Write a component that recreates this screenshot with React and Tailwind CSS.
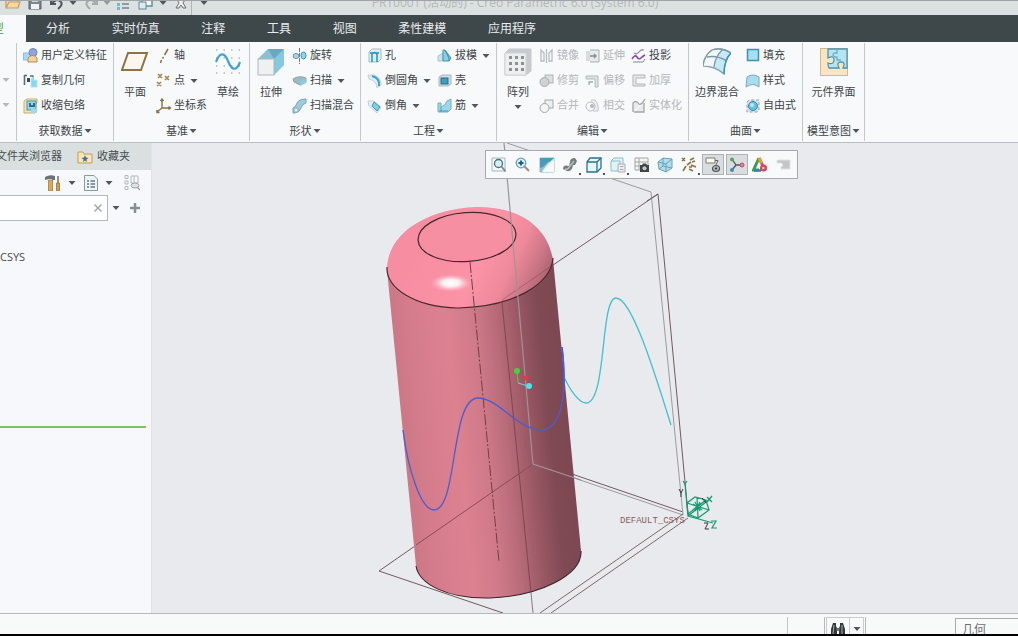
import clsx from "clsx";

const TABS = ["分析", "实时仿真", "注释", "工具", "视图", "柔性建模", "应用程序"];

const ICONS = {
  udf: (
    <>
      <rect x="0.500" y="5" width="8" height="7" fill="#a9d9ee" stroke="#8fbfd6" />
      <circle cx="10" cy="4.500" r="4" fill="#8ea6dc" stroke="#6c86c4" />
      <path d="M5 14V10Q9.500 5 14 10V14Z" fill="#f3d3a4" stroke="#b98c4d" />
    </>
  ),
  copyGeom: (
    <>
      <path d="M1.500 2V12M1 2.500H4" fill="none" stroke="#5f6d78" strokeWidth="1.600" />
      <rect x="4" y="5" width="3" height="4" fill="#354f60" />
      <path d="M7 3H10V7" fill="none" stroke="#5f6d78" strokeWidth="1.300" />
      <path d="M8 6L10 4V7H14V14H8Z" fill="#8ad8ef" stroke="#b6e5f3" />
    </>
  ),
  shrink: (
    <>
      <path d="M1 3L4 1H14V5L12 6V15H1Z" fill="#f6e3ae" stroke="#c9ad63" />
      <rect x="4" y="3" width="9" height="9" fill="#9ad6ea" stroke="#4794b3" />
      <path d="M6 5H8V7H10V5H12V9H6Z" fill="#2f6f8c" />
      <path d="M8 11H14V15H8Z" fill="#9cdbec" />
    </>
  ),
  axis: <path d="M12 1L8.500 7M7.500 9L6.500 10.500M5.500 12L4.500 15" stroke="#8c7142" strokeWidth="1.500" />,
  point: (
    <path
      d="M2 1L6 5M6 1L2 5M9 3L13 7M13 3L9 7M1 9L5 13M5 9L1 13"
      stroke="#a08347"
      strokeWidth="1.500"
    />
  ),
  coord: (
    <path
      d="M6 1V10L1 14M6 10H14M4.500 3L6 1L7.500 3M12.500 8.500L14.500 10L12.500 11.500M1 12V14.500H3.500"
      fill="none"
      stroke="#8c7142"
      strokeWidth="1.400"
    />
  ),
  revolve: (
    <>
      <path d="M7.500 0V16" stroke="#607681" strokeDasharray="4 1" />
      <ellipse cx="4" cy="8" rx="3" ry="2.500" fill="#b8cdd6" stroke="#6b98ad" />
      <ellipse cx="11.500" cy="7.500" rx="2.500" ry="3.500" fill="#8ed5ee" stroke="#3e93b5" />
    </>
  ),
  sweep: (
    <>
      <path d="M1 6Q7 2 14 5V9Q9 8 8 12L2 9Z" fill="#9eb9c3" stroke="#8da5ae" />
      <path d="M8 8L14 6V10L8 13Z" fill="#8acbdf" />
    </>
  ),
  sweepBlend: (
    <>
      <path d="M1 10Q4 9 5 5Q7 1 14 1V5Q10 6 9 10Q8 14 3 15H1Z" fill="#9dcbe0" stroke="#7ba4b7" />
      <path d="M2 10H6V14H2Z" fill="#e0edf3" stroke="#8babb9" />
    </>
  ),
  hole: (
    <>
      <path d="M2 4L5 1H14V11L11 14H2Z" fill="#dceff5" stroke="#9fbfcb" />
      <path d="M5 14V6Q8 3 10 6V14M3 5H12" fill="none" stroke="#2692b6" strokeWidth="1.500" />
    </>
  ),
  round: (
    <>
      <path d="M1 2H7Q14 4 14 12L10 15Q10 8 2 6Z" fill="#dcedf3" stroke="#c0d2d9" />
      <path d="M5 3Q13 5 12 13" fill="none" stroke="#39a2ca" strokeWidth="2" />
    </>
  ),
  chamfer: (
    <>
      <path d="M1 3H7L14 9L10 15L2 8Z" fill="#e3eef2" stroke="#c3d1d7" />
      <path d="M7 4L13 9L10 13L5 8Z" fill="#84cce3" stroke="#3f9abc" />
    </>
  ),
  draft: (
    <>
      <path d="M1 13V8L6 5V13Z" fill="#cbe2eb" stroke="#a9c5d0" />
      <path d="M6 13V2H8L14 10L12 13Z" fill="#8bcde4" stroke="#4195b6" />
      <path d="M8 2L12 10V13" fill="none" stroke="#3c87a5" />
    </>
  ),
  shell: (
    <>
      <path d="M2 4L5 2H14V11L11 13H2Z" fill="#d2dde1" stroke="#a9b8be" />
      <rect x="4" y="5" width="7" height="6" fill="#3f9dbd" stroke="#276f8a" />
    </>
  ),
  rib: (
    <>
      <path d="M1 5H4V14H1ZM10 3L14 1V11L11 14H4V9Q8 8 10 3Z" fill="#9ed5e8" stroke="#74afc7" />
      <path d="M2 13H11" stroke="#4d9fbe" />
    </>
  ),
  mirror: (
    <path d="M7.500 1V15M2 2L5 5V13H2ZM13 2L10 5V13H13Z" fill="none" stroke="#b7bcbf" strokeWidth="1.300" />
  ),
  trim: (
    <>
      <rect x="6" y="2" width="8" height="8" fill="#dcdfe0" stroke="#b0b4b6" />
      <circle cx="5.500" cy="9" r="4.500" fill="#cfd3d5" stroke="#a9adb0" />
    </>
  ),
  merge: (
    <>
      <rect x="6" y="2" width="8" height="8" fill="#eceeef" stroke="#a4a9ac" />
      <circle cx="5.500" cy="10" r="4.500" fill="#f3f4f5" stroke="#a4a9ac" />
    </>
  ),
  extend: (
    <>
      <path d="M5 2H14V14H5" fill="#e6e8e9" stroke="#aaafb2" />
      <path d="M1 3H5V13H1Z" fill="#d9dcdd" />
      <path d="M5 8H11M9 6L11 8L9 10" fill="none" stroke="#868c90" strokeWidth="1.300" />
    </>
  ),
  offset: (
    <>
      <path d="M1 3H13V14H10V6H1Z" fill="#dfe2e3" stroke="#b5b9bb" />
      <path d="M4 12V9H8" fill="none" stroke="#a3a8ab" strokeWidth="1.300" />
    </>
  ),
  intersect: (
    <>
      <path d="M6 2H10Q14 6 13 13H8" fill="#eceeef" stroke="#c2c6c8" />
      <circle cx="5.500" cy="8.500" r="4.500" fill="none" stroke="#b5babc" />
      <circle cx="7" cy="8" r="2" fill="#b4b9bb" />
    </>
  ),
  project: (
    <>
      <path d="M3 5Q6 7 8 4Q10 1 13 2" fill="none" stroke="#90969a" strokeWidth="1.300" />
      <path d="M1 11Q4 6 6 9T10 10T14 7" fill="none" stroke="#8d479e" strokeWidth="1.600" />
      <path d="M2 14H12L14 11" fill="none" stroke="#7b8b93" />
    </>
  ),
  thicken: <path d="M14 2H2V13H14V11H5V5H14Z" fill="#e5e7e8" stroke="#b2b7b9" />,
  solidify: (
    <path d="M2 14V5Q5 2 7 5T12 4L14 1M3 14H13V5" fill="#e8eaeb" stroke="#a1a6a9" strokeWidth="1.300" />
  ),
  fill: <rect x="2.500" y="1.500" width="11" height="11" fill="#a4dff2" stroke="#3d91b3" strokeWidth="1.500" />,
  style: <path d="M2 4Q8 0 14 4V14Q8 9 1 14Z" fill="#a8dcef" stroke="#7fa9ba" />,
  freestyle: (
    <>
      <path d="M2 4L4 2H14V12L12 14H2Z" fill="#dbe5e9" stroke="#8fa3ad" strokeDasharray="3 2" />
      <circle cx="8" cy="8" r="4.500" fill="#68c1de" stroke="#348bac" />
      <circle cx="7" cy="7" r="2" fill="#b8e8f6" />
    </>
  ),
  folder: (
    <path d="M1 13V3H6L7 5H13V7H15L13 13ZM1 13L4 7H14" fill="#f5d79f" stroke="#c69e60" strokeWidth="1.200" />
  ),
  save: (
    <>
      <path d="M2 2H14V14H2Z" fill="#7e878f" stroke="#596269" />
      <path d="M5 2H11V7H5Z" fill="#d4d9dc" />
      <path d="M4 9H12V14H4Z" fill="#f1f3f4" />
    </>
  ),
  undo: <path d="M2 4V9H7M2.500 9Q7 3 11 6T9 14" fill="none" stroke="#4f5659" strokeWidth="2" />,
  redo: <path d="M14 4V9H9M13.500 9Q9 3 5 6T7 14" fill="none" stroke="#a5abad" strokeWidth="2" />,
  regen: (
    <>
      <path d="M2 3H5V6H2ZM2 8H5V11H2ZM2 12H5V15H2Z" fill="#7eb3cc" />
      <path d="M7 5H14M7 9H14M7 13H14" stroke="#75858d" strokeWidth="1.500" />
    </>
  ),
  windows: (
    <>
      <rect x="5" y="2" width="10" height="9" fill="#f4f6f7" stroke="#5c8fa8" strokeWidth="1.500" />
      <rect x="2" y="7" width="7" height="7" fill="#dcebf2" stroke="#698693" />
    </>
  ),
  close: <path d="M3 3H6L8 6L10 3H13L10 8L13 13H10L8 10L6 13H3L6 8Z" fill="#eef0f0" stroke="#6a7072" />,
  favorites: (
    <>
      <path d="M1 3H6L7 5H15V14H1Z" fill="#fbe5b8" stroke="#c49d58" />
      <path d="M8 6L9 8.500L11.500 9L9.500 10.500L10 13L8 11.500L6 13L6.500 10.500L4.500 9L7 8.500Z" fill="#3c7593" />
    </>
  ),
  tools: (
    <>
      <path d="M0 2Q5 -1 10 1V5H7V4H4L0 5Z" fill="#697278" />
      <path d="M3.500 5H7.500V16H3.500Z" fill="#dba95c" stroke="#a87b3a" strokeWidth=".8" />
      <path d="M13 1V8" stroke="#6a6f73" strokeWidth="1.500" />
      <path d="M11.500 8H14.500V16H11.500Z" fill="#d39c4c" stroke="#9f7332" strokeWidth=".8" />
    </>
  ),
  listDoc: (
    <>
      <path d="M1.500 .5H11L14.500 4V15.500H1.500Z" fill="#eef3f5" stroke="#8999a1" />
      <path d="M4 6H6M4 9H6M4 12H6M7.500 6H12M7.500 9H12M7.500 12H12" stroke="#667a84" strokeWidth="1.400" />
    </>
  ),
  treeFind: (
    <>
      <path d="M1 0.500H4V3.500H1ZM1 6H4V9H1ZM1 11.500H4V14.500H1ZM7 1H14V8H7ZM7 11H10M10 1V7" fill="none" stroke="#b2b8bb" />
      <ellipse cx="11" cy="10.500" rx="4" ry="2.500" fill="#dfe2e3" stroke="#9fa5a8" />
      <path d="M13 12L16 15" stroke="#9fa5a8" strokeWidth="1.500" />
    </>
  ),
  zoomFit: (
    <>
      <path d="M1 1H14V14H1Z" fill="#f5f8f9" stroke="#a9b6bc" />
      <circle cx="7.500" cy="6.500" r="4" fill="#d8eef5" stroke="#40738a" strokeWidth="1.300" />
      <path d="M10.500 9.500L14.500 14.500" stroke="#7f8b90" strokeWidth="2" />
    </>
  ),
  zoomIn: (
    <>
      <circle cx="6" cy="6" r="4.800" fill="#d8eff7" stroke="#69a3ba" strokeWidth="1.300" />
      <path d="M3.500 6H8.500M6 3.500V8.500" stroke="#1c5d7c" strokeWidth="1.800" />
      <path d="M9.500 9.500L14 14" stroke="#a18d7c" strokeWidth="2" />
    </>
  ),
  repaint: (
    <>
      <path d="M1 1H15V15H1Z" fill="#8dc1d5" stroke="#9bb8c4" />
      <path d="M1 1H15V4L9 5L4 10L1 11Z" fill="#4b9ab9" />
      <path d="M15 3Q10 6 3 15H15Z" fill="#f6fafb" />
      <path d="M15 2Q9 7 4 14" fill="none" stroke="#dfeff5" strokeWidth="1.500" />
    </>
  ),
  shading: (
    <>
      <path d="M1 12Q1 7 7 9L8 5Q8 1 13 1L15 4L13 8L11 8Q10 15 5 14Z" fill="#777b7e" />
      <path d="M3 12Q6 13 8 9L12 4" fill="none" stroke="#bbbfc1" strokeWidth="1.500" />
    </>
  ),
  display: (
    <>
      <path d="M1 5L4 1H15V11L11 15H1Z" fill="#e6f5fa" stroke="#28738f" strokeWidth="1.300" />
      <path d="M1 5H11V15M11 5L15 1" fill="none" stroke="#28738f" strokeWidth="1.300" />
    </>
  ),
  savedViews: (
    <>
      <path d="M1 4L4 1H13V11L10 14H1Z" fill="#e3f2f7" stroke="#8abed0" />
      <path d="M1 4H10V14" fill="none" stroke="#8abed0" />
      <path d="M8 7H15V15H8Z" fill="#eceeee" stroke="#a9b0b3" />
      <path d="M10 9.500H13.500M10 12.500H13.500" stroke="#a9b0b3" />
    </>
  ),
  viewManager: (
    <>
      <path d="M1 1H14V13H1ZM1 5H14M5 1V13M1 9H8" fill="#f4f5f5" stroke="#a0a6a9" />
      <path d="M6 8H8L9 6.500H12L13 8H15V15H6Z" fill="#3e4447" />
      <circle cx="10.500" cy="11.300" r="2" fill="#c2c8ca" />
    </>
  ),
  perspective: (
    <>
      <path d="M1 5L6 1L15 2V11L9 15L2 12Z" fill="#b3dceb" stroke="#65a2ba" />
      <path d="M1 5L9 7L15 2M9 7V15M6 1V9L2 12M6 9L15 11" fill="none" stroke="#65a2ba" />
    </>
  ),
  datumDisplay: (
    <path
      d="M1 1L4 4M4 1L1 4M9 3L13 1M6 8L10 5M2 14L5 9M10 8L15 10M8 12L12 14M11 5L14 4M8 10L11 10"
      stroke="#8b7442"
      strokeWidth="1.600"
    />
  ),
  annotation: (
    <>
      <path d="M1 1H10V6H1Z" fill="#fffce8" stroke="#777c7e" />
      <path d="M10 3.500H13L11 8" fill="none" stroke="#666c6f" />
      <ellipse cx="11" cy="11.500" rx="3.500" ry="3" fill="#aeb3b5" stroke="#4f5659" strokeWidth="1.200" />
      <circle cx="11" cy="11.500" r="1" fill="#2d3436" />
    </>
  ),
  spin: (
    <>
      <path d="M3 2L7 8H13M7 8L3 13" fill="none" stroke="#465b5d" strokeWidth="1.300" />
      <circle cx="3" cy="2.500" r="2" fill="#50a866" />
      <circle cx="13" cy="8" r="2" fill="#e98190" stroke="#b54f60" />
      <circle cx="3" cy="13" r="2" fill="#3a8fb4" />
    </>
  ),
  appearance: (
    <>
      <path d="M7 1L1.500 13H7" fill="none" stroke="#3e9b58" strokeWidth="3" />
      <path d="M7 1L12 11" fill="none" stroke="#d24ca0" strokeWidth="3" />
      <path d="M7 1L9.500 6" stroke="#e0a526" strokeWidth="3" />
      <path d="M2 13.500H9" stroke="#347fc0" strokeWidth="2.500" />
      <circle cx="11.500" cy="11" r="3.500" fill="#da4258" />
      <path d="M10.500 9.500L13 11L10.500 12.500Z" fill="#fff" />
    </>
  ),
  pause: <path d="M1 3H14V12H5V10Q9 8 5 6H1Z" fill="#c3c7c9" stroke="#dfe1e2" />,
  binoculars: (
    <>
      <path d="M3 1H6V4L7 6V15H1V7ZM10 1H13L15 7V15H9V6L10 4Z" fill="#33383a" />
      <path d="M6.500 6H9.500V9H6.500Z" fill="#6e7679" />
      <path d="M4 3L3 12M12 3L12 12" stroke="#a7adaf" />
    </>
  ),
};

const BIG_ICONS = {
  plane: <path d="M7 5H26L20 22H1Z" fill="#fbf7ef" stroke="#8f7443" strokeWidth="2" />,
  sketch: (
    <>
      <path d="M2 2H26M2 10H26M2 18H26M2 25H26" stroke="#8d9aa2" strokeDasharray="1.500 6" />
      <path d="M2 14C6 3 11 5 14 13S22 25 26 14" fill="none" stroke="#42a4cf" strokeWidth="2.200" />
    </>
  ),
  extrude: (
    <>
      <path d="M1 11L11 1H27V17L17 27H1Z" fill="#a5d7e7" />
      <path d="M1 11L11 1H27L17 11Z" fill="#8cc0d2" />
      <path d="M17 11L27 1V17L17 27Z" fill="#86c9df" />
      <path d="M11 1L17 11L27 1Z" fill="#4b9ab8" opacity=".6" />
      <rect x="1" y="11" width="16" height="16" fill="#edf1f2" stroke="#adb8bd" />
    </>
  ),
  pattern: (
    <>
      <path d="M1 5L5 1H27V23L22 27H1Z" fill="#c8cbcd" stroke="#c6cacc" />
      <path d="M1 5H22V27H1Z" fill="#eceeef" stroke="#d0d3d5" />
      <g fill="#8c9194">
        <path d="M5 8H8V11H5ZM11 8H14V11H11ZM17 8H20V11H17Z" />
        <path d="M5 14H8V17H5ZM11 14H14V17H11ZM17 14H20V17H17Z" />
        <path d="M5 20H8V23H5ZM11 20H14V23H11ZM17 20H20V23H17Z" />
      </g>
    </>
  ),
  boundary: (
    <>
      <path d="M9 2Q19 -1 28 5Q21 12 21 26Q12 18 0 18Q1 8 9 2Z" fill="#c6e9f5" stroke="#8aa5b1" strokeWidth="1.300" />
      <path d="M9 2Q14 0 19 2Q12 9 11 19Q6 17 0 18Q1 8 9 2Z" fill="#f2f8fa" />
      <path d="M9 2Q19 -1 28 5M19 2Q12 9 11 19M4 9Q14 7 24 13M9 2Q1 8 0 18" fill="none" stroke="#7c99a6" strokeWidth="1.300" />
      <path d="M28 5Q21 12 21 26" fill="none" stroke="#2d96bf" strokeWidth="1.500" />
    </>
  ),
  component: (
    <>
      <rect x="0.500" y="0.500" width="27" height="27" fill="#fae5c2" stroke="#d3b98b" />
      <path
        d="M8 1H27V20H23Q26 14 21 14Q16 14 19 20H9Q8 19 8 15Q14 17 14 12Q14 7 8 10Z"
        fill="#b5e5f4"
        stroke="#4e93ad"
        strokeWidth="1.300"
      />
      <path d="M17 1V5Q13 4 13 7Q14 10 17 9V12H21" fill="none" stroke="#6fadc4" strokeWidth="1.300" />
    </>
  ),
};

const VIEW_TOOLS = [
  { icon: "zoomFit", label: "重新调整" },
  { icon: "zoomIn", label: "放大" },
  { icon: "repaint", label: "重画" },
  { icon: "shading", label: "渲染", menu: true },
  { icon: "display", label: "显示样式", menu: true },
  { icon: "savedViews", label: "已保存方向", menu: true },
  { icon: "viewManager", label: "视图管理器" },
  { icon: "perspective", label: "透视图" },
  { icon: "datumDisplay", label: "基准显示", menu: true },
  { icon: "annotation", label: "注释显示", active: true },
  { icon: "spin", label: "旋转中心", active: true },
  { icon: "appearance", label: "外观" },
  { icon: "pause", label: "暂停" },
];

function Icon({ name }) {
  return (
    <svg className="size-4 shrink-0" viewBox="0 0 16 16" fill="none" aria-hidden="true">
      {ICONS[name]}
    </svg>
  );
}

function Caret({ className = "text-[#50575a]" }) {
  return (
    <svg className={clsx("h-1 w-2 shrink-0", className)} viewBox="0 0 8 4" aria-hidden="true">
      <path d="M.5 0H7.500L4 4Z" fill="currentColor" />
    </svg>
  );
}

function MenuButton({ label, className }) {
  return (
    <button type="button" aria-label={label} className={clsx("flex h-4 w-3 items-center justify-center", className)}>
      <Caret />
    </button>
  );
}

function Tool({ icon, menu, disabled, children }) {
  return (
    <button
      type="button"
      disabled={disabled}
      className={clsx(
        "flex h-[25px] items-center gap-[2px] whitespace-nowrap",
        disabled ? "text-[#b3b7ba]" : "text-[#3d4548]"
      )}
    >
      <Icon name={icon} />
      <span>{children}</span>
      {menu ? <Caret className="ml-[3px] text-[#50575a]" /> : null}
    </button>
  );
}

function BigTool({ icon, menu, children }) {
  return (
    <button type="button" className="flex min-w-[30px] flex-col items-center whitespace-nowrap pt-[5px] leading-4">
      <svg className="size-7" viewBox="0 0 28 28" fill="none" aria-hidden="true">
        {BIG_ICONS[icon]}
      </svg>
      <span className="mt-2">{children}</span>
      {menu ? <Caret className="mt-[5px] text-[#50575a]" /> : null}
    </button>
  );
}

function Column({ children }) {
  return <div className="flex flex-col items-start">{children}</div>;
}

function Group({ title, narrow, children }) {
  return (
    <section
      className={clsx(
        "my-px flex shrink-0 flex-col border-r border-[#c3c8cb]",
        narrow ? "px-1" : "px-[6px]"
      )}
    >
      <div className="flex h-[75px] shrink-0 justify-center gap-[6px]">{children}</div>
      <button type="button" className="flex h-[23px] items-center justify-center gap-px whitespace-nowrap pt-[3px]">
        {title}
        <Caret />
      </button>
    </section>
  );
}

function TitleBar() {
  return (
    <header className="h-[15px] shrink-0 overflow-hidden border-t border-[#9fa5a6] bg-[#dbe1e0]">
      <div className="-mt-[10px] grid h-[22px] grid-cols-[1fr_auto_1fr] items-center">
        <div className="flex items-center pl-[5px]">
          <button type="button" aria-label="打开"><Icon name="folder" /></button>
          <button type="button" aria-label="保存" className="ml-[6px]"><Icon name="save" /></button>
          <button type="button" aria-label="撤消" className="ml-[6px]"><Icon name="undo" /></button>
          <MenuButton label="撤消列表" className="ml-[2px]" />
          <button type="button" aria-label="重做" className="ml-1"><Icon name="redo" /></button>
          <MenuButton label="重做列表" className="ml-[2px] opacity-50" />
          <button type="button" aria-label="重新生成" className="ml-[2px]"><Icon name="regen" /></button>
          <button type="button" aria-label="窗口" className="ml-[6px]"><Icon name="windows" /></button>
          <MenuButton label="窗口列表" className="ml-1" />
          <button type="button" aria-label="关闭" className="ml-1"><Icon name="close" /></button>
          <span className="ml-[2px] h-6 w-px bg-[#aeb5b6]" />
          <MenuButton label="自定义" className="ml-[6px]" />
        </div>
        <h1 className="whitespace-nowrap pl-3 text-xs text-[#b3b8b9]">
          PRT0001 (活动的) - Creo Parametric 6.0 (System 6.0)
        </h1>
      </div>
    </header>
  );
}

function MenuTabs() {
  return (
    <nav className="flex h-[27px] shrink-0 overflow-hidden bg-[#3e484b] text-xs text-[#e9eced]">
      <a href="#model" className="flex w-[26px] shrink-0 items-center bg-[#f7f9fa] text-[#4aa03f]">
        <span className="-ml-2">型</span>
      </a>
      <div className="flex max-w-[530px] flex-1 justify-between px-5">
        {TABS.map((tab) => (
          <a key={tab} href="#tab" className="flex items-center whitespace-nowrap">
            {tab}
          </a>
        ))}
      </div>
    </nav>
  );
}

function Ribbon() {
  return (
    <div className="flex h-[101px] shrink-0 overflow-hidden border-b border-[#b9bec1] bg-[#f7f9fb] text-[11px] text-[#3d4548]">
      <div className="my-px flex w-[17px] shrink-0 flex-col items-center border-r border-[#c3c8cb] pr-1 pt-[35px]">
        <Caret className="text-[#b3b8bb]" />
        <Caret className="mt-[21px] text-[#b3b8bb]" />
      </div>
      <Group title="获取数据">
        <Column>
          <Tool icon="udf">用户定义特征</Tool>
          <Tool icon="copyGeom">复制几何</Tool>
          <Tool icon="shrink">收缩包络</Tool>
        </Column>
      </Group>
      <Group title="基准">
        <BigTool icon="plane">平面</BigTool>
        <Column>
          <Tool icon="axis">轴</Tool>
          <Tool icon="point" menu>点</Tool>
          <Tool icon="coord">坐标系</Tool>
        </Column>
        <BigTool icon="sketch">草绘</BigTool>
      </Group>
      <Group title="形状">
        <BigTool icon="extrude">拉伸</BigTool>
        <Column>
          <Tool icon="revolve">旋转</Tool>
          <Tool icon="sweep" menu>扫描</Tool>
          <Tool icon="sweepBlend">扫描混合</Tool>
        </Column>
      </Group>
      <Group title="工程">
        <Column>
          <Tool icon="hole">孔</Tool>
          <Tool icon="round" menu>倒圆角</Tool>
          <Tool icon="chamfer" menu>倒角</Tool>
        </Column>
        <Column>
          <Tool icon="draft" menu>拔模</Tool>
          <Tool icon="shell">壳</Tool>
          <Tool icon="rib" menu>筋</Tool>
        </Column>
      </Group>
      <Group title="编辑">
        <BigTool icon="pattern" menu>阵列</BigTool>
        <Column>
          <Tool icon="mirror" disabled>镜像</Tool>
          <Tool icon="trim" disabled>修剪</Tool>
          <Tool icon="merge" disabled>合并</Tool>
        </Column>
        <Column>
          <Tool icon="extend" disabled>延伸</Tool>
          <Tool icon="offset" disabled>偏移</Tool>
          <Tool icon="intersect" disabled>相交</Tool>
        </Column>
        <Column>
          <Tool icon="project">投影</Tool>
          <Tool icon="thicken" disabled>加厚</Tool>
          <Tool icon="solidify" disabled>实体化</Tool>
        </Column>
      </Group>
      <Group title="曲面">
        <BigTool icon="boundary">边界混合</BigTool>
        <Column>
          <Tool icon="fill">填充</Tool>
          <Tool icon="style">样式</Tool>
          <Tool icon="freestyle">自由式</Tool>
        </Column>
      </Group>
      <Group title="模型意图" narrow>
        <BigTool icon="component">元件界面</BigTool>
      </Group>
    </div>
  );
}

function Sidebar() {
  return (
    <aside className="flex w-[152px] shrink-0 flex-col border-r border-[#dfe3e6] bg-[#f7f8fb] text-[11px] text-[#454c4f]">
      <div className="flex h-[27px] shrink-0 items-center overflow-hidden bg-[#d9e0df]">
        <button type="button" className="-ml-1 whitespace-nowrap">文件夹浏览器</button>
        <button type="button" className="ml-[15px] flex items-center gap-1 whitespace-nowrap">
          <Icon name="favorites" />
          收藏夹
        </button>
      </div>
      <div className="flex h-[25px] shrink-0 items-center pl-[45px]">
        <button type="button" aria-label="设置"><Icon name="tools" /></button>
        <MenuButton label="设置列表" className="ml-[5px]" />
        <button type="button" aria-label="显示" className="ml-[5px]"><Icon name="listDoc" /></button>
        <MenuButton label="显示列表" className="ml-1" />
        <button type="button" aria-label="树过滤器" className="ml-[9px]"><Icon name="treeFind" /></button>
      </div>
      <div className="flex h-[26px] shrink-0 items-center">
        <div className="flex h-full w-[108px] items-center border border-l-0 border-[#b3b8ba] bg-white">
          <input type="text" aria-label="搜索" className="min-w-0 flex-1 bg-transparent outline-none" />
          <button type="button" aria-label="清除" className="mr-1">
            <svg className="size-[10px]" viewBox="0 0 10 10" aria-hidden="true">
              <path d="M1.500 1.500L8.500 8.500M8.500 1.500L1.500 8.500" stroke="#999fa1" strokeWidth="1.300" />
            </svg>
          </button>
        </div>
        <MenuButton label="搜索选项" className="ml-[2px]" />
        <button type="button" aria-label="添加" className="ml-2">
          <svg className="size-[10px]" viewBox="0 0 10 10" aria-hidden="true">
            <path d="M5 0V10M0 5H10" stroke="#8a9092" strokeWidth="2.500" />
          </svg>
        </button>
      </div>
      <div className="mr-[5px] h-[207px] shrink-0 border-b-2 border-[#7cc55c] pt-7 leading-4">CSYS</div>
    </aside>
  );
}

function Model() {
  return (
    <svg
      className="absolute inset-0 h-full w-full"
      viewBox="152 143 866 470"
      preserveAspectRatio="xMidYMid slice"
      fill="none"
      role="img"
      aria-label="PRT0001"
    >
      <defs>
        <linearGradient id="body" gradientUnits="userSpaceOnUse" x1="402" y1="410" x2="566" y2="394">
          <stop offset="0" stopColor="#cd7887" />
          <stop offset=".14" stopColor="#d67d8d" />
          <stop offset=".32" stopColor="#dc8190" />
          <stop offset=".48" stopColor="#d07a89" />
          <stop offset=".62" stopColor="#b86b79" />
          <stop offset=".76" stopColor="#985763" />
          <stop offset=".88" stopColor="#804a55" />
          <stop offset="1" stopColor="#7e4853" />
        </linearGradient>
        <linearGradient id="dome" gradientUnits="userSpaceOnUse" x1="430" y1="222" x2="558" y2="285">
          <stop offset="0" stopColor="#f68da1" />
          <stop offset=".45" stopColor="#fb92a6" />
          <stop offset=".65" stopColor="#ee899b" />
          <stop offset=".8" stopColor="#cc7686" />
          <stop offset="1" stopColor="#905461" />
        </linearGradient>
        <radialGradient id="shine">
          <stop offset="0" stopColor="#fff" />
          <stop offset=".4" stopColor="#fff" stopOpacity=".85" />
          <stop offset="1" stopColor="#ffb4c2" stopOpacity="0" />
        </radialGradient>
      </defs>

      {/* datum planes behind the solid */}
      <path d="M572 474L683 512M553 265L658 194L688 514" stroke="#75585d" />
      <path d="M507 143L651 192L683 515L533 464" stroke="#9a9b9f" />
      <path d="M379 571L503 613M379 571L533 464" stroke="#75585d" />
      <path d="M683 514L540 613M688 518L551 613" stroke="#80666a" />
      <path d="M647 201L658 194" stroke="#75585d" />

      {/* cylinder */}
      <path
        d="M387 270L416 566C419 584 447 599 490 598C540 596 582 575 581 551L553 259Z"
        fill="url(#body)"
      />
      <path d="M416 566C419 584 447 599 490 598C540 596 582 575 581 551" stroke="#3b2228" strokeWidth="1.100" />
      <path
        d="M387 271C386 233 428 209 475 207C521 206 548 228 553 260C551 284 514 307 458 308C414 307 387 290 387 271Z"
        fill="url(#dome)"
      />
      <path d="M387 267C386 288 414 307 458 308C514 307 551 284 553 258" stroke="#472930" strokeWidth="1.200" />
      <ellipse cx="467" cy="237" rx="49" ry="24.500" transform="rotate(-4 467 237)" fill="#f78fa2" stroke="#46272e" strokeWidth="1.200" />
      <ellipse cx="451" cy="283" rx="21" ry="9" fill="url(#shine)" />

      {/* datums seen through the solid */}
      <path d="M553 265L502 300" stroke="#69383f" strokeOpacity=".35" />
      <path d="M502 302L533 613" stroke="#69383f" strokeOpacity=".65" />
      <path d="M533 464L416 545" stroke="#8a4d57" />
      <path d="M504 143L533 464L581 480" stroke="#a19296" strokeWidth="1.200" />
      <path d="M470 262L499 562" stroke="#713f47" strokeDasharray="11 2 2 2" />

      <path
        d="M403 430C408 470 421 510 434 510C458 510 450 398 478 398C499 398 517 430 542 430C563 428 567 390 562 347"
        stroke="#4d5bce"
        strokeWidth="1.300"
      />
      <path
        d="M564 377C570 390 579 403 586 403C607 403 600 298 616 298C632 298 655 374 671 425"
        stroke="#43bfce"
        strokeWidth="1.300"
      />
      <path d="M562 347C564 362 564 370 564 381" stroke="#405bdd" strokeWidth="1.500" />

      {/* spin center */}
      <path d="M517 371L518 383" stroke="#6dac4f" strokeWidth="1.300" />
      <path d="M518 383L528 386" stroke="#72cbd2" strokeWidth="1.300" />
      <circle cx="526" cy="378" r="2.500" fill="#d63f4c" />
      <circle cx="517" cy="371" r="3" fill="#49cf3b" />
      <circle cx="529" cy="386" r="3" fill="#50e2e8" />

      {/* default coordinate system */}
      <text x="620" y="523" fill="#875b61" className="font-['Liberation_Mono',monospace] text-[9px]">
        DEFAULT_CSYS
      </text>
      <g stroke="#169a70" strokeWidth="1.200">
        <path d="M685 484L688 516L713 523M688 516L710 499" />
        <path d="M687 503L695 497L706 500L709 510L698 518L688 514ZM687 503L709 510M697 497L698 518M706 500L688 514" />
        <path d="M693 504L702 510M693 510L702 503M695 502L700 511M700 502L695 511" />
        <path d="M683 481L685 484L687 481M707 497L712 502M712 496L707 502M711 521H716L712 528H717" />
      </g>
      <path d="M679 489L681 493L683 489M681 493V497M702 498L706 503M704 523H708L705 529H709" stroke="#30383a" />
    </svg>
  );
}

function ViewToolbar() {
  return (
    <div
      role="toolbar"
      aria-label="视图"
      className="absolute left-[333px] top-[7px] flex h-[29px] w-[313px] items-center justify-between border border-[#a6aaad] bg-[#f7f9fa] px-[2px]"
    >
      {VIEW_TOOLS.map(({ icon, label, menu, active }) => (
        <button
          key={icon}
          type="button"
          aria-label={label}
          className={clsx(
            "relative flex h-[21px] w-[22px] items-center justify-center",
            active && "border border-[#aeb1b5] bg-[#dadce0]"
          )}
        >
          <Icon name={icon} />
          {menu ? <span className="absolute bottom-0 right-0 size-[2px] bg-[#4d5457]" /> : null}
        </button>
      ))}
    </div>
  );
}

function StatusBar() {
  return (
    <footer className="flex h-[23px] shrink-0 justify-end overflow-hidden border-b-2 border-t border-b-black border-t-[#b7babd] bg-[#f8faf9] pt-[3px] text-xs text-[#6b7072]">
      <span className="mr-9 h-6 w-px shrink-0 bg-[#c2c6c8]" />
      <div className="mr-[89px] flex h-6 shrink-0 border-x border-[#b5b9bb] px-px">
        <button type="button" aria-label="查找" className="flex w-6 justify-center border border-[#c8cccd] pt-1">
          <Icon name="binoculars" />
        </button>
        <button type="button" aria-label="查找选项" className="flex w-[14px] justify-center border border-l-0 border-[#c8cccd] pt-[9px]">
          <Caret />
        </button>
      </div>
      <select
        aria-label="选择过滤器"
        className="mt-px h-6 w-[63px] shrink-0 appearance-none border border-r-0 border-[#a9adaf] bg-[#f8faf9] pl-[6px]"
      >
        <option>几何</option>
      </select>
    </footer>
  );
}

export default function App() {
  return (
    <div className="flex h-screen flex-col overflow-hidden bg-[#e8eaee] font-['Open_Sans','Noto_Sans_CJK_SC',sans-serif]">
      <TitleBar />
      <MenuTabs />
      <Ribbon />
      <div className="flex min-h-0 flex-1">
        <Sidebar />
        <main className="relative min-w-0 flex-1 overflow-hidden">
          <Model />
          <ViewToolbar />
        </main>
      </div>
      <StatusBar />
    </div>
  );
}
